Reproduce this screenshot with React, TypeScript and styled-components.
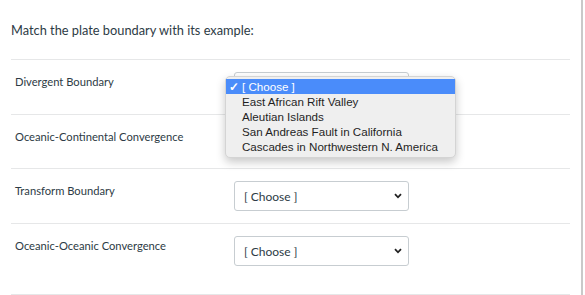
import React from "react";
import styled, { createGlobalStyle } from "styled-components";

const Global = createGlobalStyle`
  html, body { margin: 0; padding: 0; background: #fff; }
  body { font-family: Lato, "Noto Sans", sans-serif; color: #2d3b45; }
`;

const Page = styled.div`
  position: relative;
  width: 585px;
  height: 295px;
  display: flex;
  overflow: hidden;
  background: #fff;
`;

const Main = styled.div`
  flex: 0 0 570px;
  padding-left: 11px;
  box-sizing: border-box;
  display: flex;
  flex-direction: column;
`;

const Gutter = styled.div`
  flex: 0 0 11px;
`;

const ScrollBar = styled.div`
  flex: 0 0 2px;
  background: #c9c9c9;
`;

const Header = styled.div`
  height: 60px;
  box-sizing: border-box;
  padding-top: 21px;
  font-size: 12.8px;
  line-height: 18px;
  border-bottom: 1px solid #e6e7e8;
`;

const Row = styled.div<{ $tall?: boolean }>`
  height: ${(p) => (p.$tall ? 71 : 55)}px;
  box-sizing: border-box;
  border-bottom: 1px solid #e6e7e8;
  display: grid;
  grid-template-columns: 223px 175px;
  align-items: start;
`;

const Label = styled.div`
  padding: 14px 0 0 4px;
  font-size: 11.2px;
  line-height: 15px;
  color: #2d3b45;
`;

const SelectBox = styled.div`
  margin-top: 12px;
  height: 30px;
  box-sizing: border-box;
  border: 1px solid #c7cdd1;
  border-radius: 3px;
  background: #fff;
  display: flex;
  align-items: center;
  justify-content: space-between;
  padding: 0 6px 0 9px;
  font-size: 12px;
  color: #2d3b45;
`;

const Popup = styled.div`
  position: absolute;
  left: 225px;
  top: 76px;
  width: 231px;
  height: 82px;
  box-sizing: border-box;
  padding-top: 2px;
  background: #efefef;
  border: 1px solid #d4d4d4;
  border-radius: 5px;
  box-shadow: 0 4px 10px rgba(0, 0, 0, 0.22);
  font-family: "Liberation Sans", Arial, sans-serif;
  font-size: 11.6px;
`;

const Option = styled.div<{ $selected?: boolean }>`
  height: 15px;
  line-height: 15px;
  display: flex;
  padding-left: ${(p) => (p.$selected ? 3 : 16)}px;
  background: ${(p) => (p.$selected ? "#4a8cfa" : "transparent")};
  color: ${(p) => (p.$selected ? "#fff" : "#1f1f1f")};
  white-space: nowrap;
`;

const Check = styled.span`
  width: 13px;
  font-weight: bold;
`;

const Chevron = () => (
  <svg width="8" height="6" viewBox="0 0 8 6">
    <path d="M1 1.2 L4 4.3 L7 1.2" fill="none" stroke="#222" strokeWidth="1.8" />
  </svg>
);

const rows = [
  "Divergent Boundary",
  "Oceanic-Continental Convergence",
  "Transform Boundary",
  "Oceanic-Oceanic Convergence",
];

const options = [
  "East African Rift Valley",
  "Aleutian Islands",
  "San Andreas Fault in California",
  "Cascades in Northwestern N. America",
];

export default function App() {
  return (
    <>
      <Global />
      <Page>
        <Main>
          <Header>Match the plate boundary with its example:</Header>
          {rows.map((r, i) => (
            <Row key={r} $tall={i === rows.length - 1}>
              <Label>{r}</Label>
              <SelectBox>
                <span>[ Choose ]</span>
                <Chevron />
              </SelectBox>
            </Row>
          ))}
        </Main>
        <Gutter />
        <ScrollBar />
        <Popup>
          <Option $selected>
            <Check>✓</Check>[ Choose ]
          </Option>
          {options.map((o) => (
            <Option key={o}>{o}</Option>
          ))}
        </Popup>
      </Page>
    </>
  );
}
